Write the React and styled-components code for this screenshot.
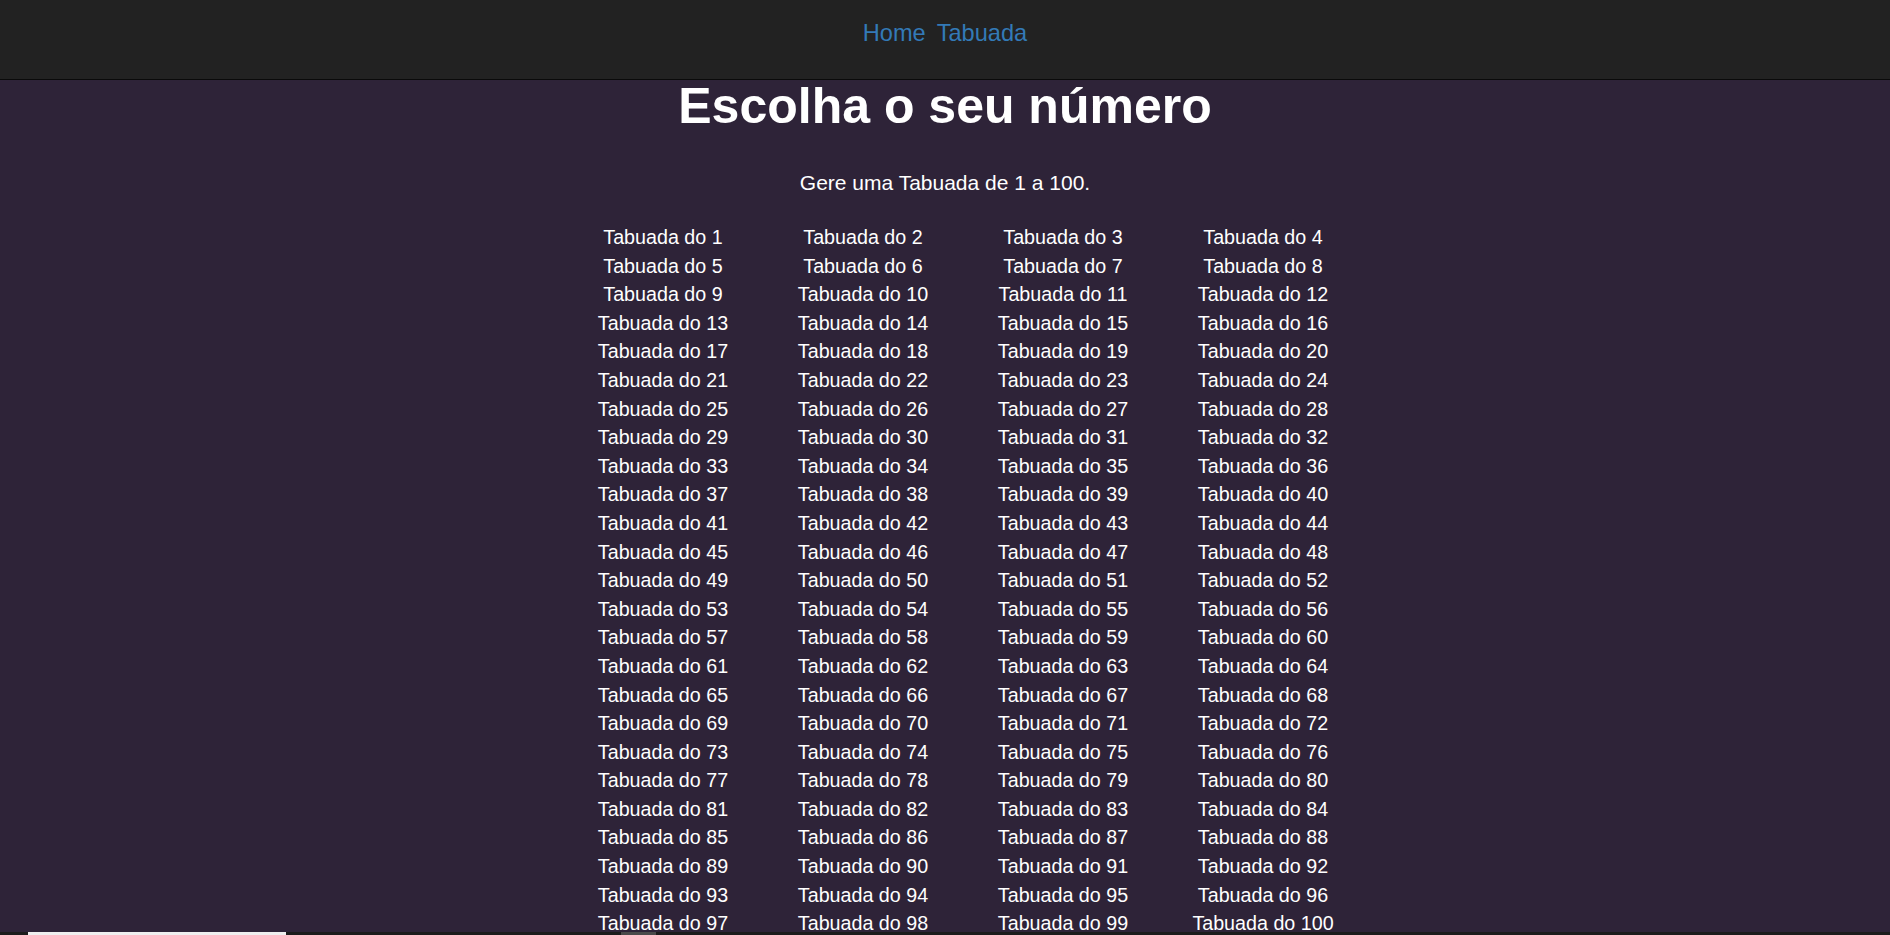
import React from "react";
import styled, { createGlobalStyle } from "styled-components";

const GlobalStyle = createGlobalStyle`
  html, body {
    margin: 0;
    padding: 0;
    height: 100%;
    overflow: hidden;
    background: #2e2338;
    font-family: "Liberation Sans", Arial, sans-serif;
    color: #ffffff;
  }
`;

const Header = styled.header`
  box-sizing: border-box;
  height: 80px;
  padding-top: 20px;
  background: #222222;
  border-bottom: 1px solid #0a0a0a;
  display: flex;
  justify-content: center;
  gap: 11px;
`;

const NavLink = styled.a`
  font-size: 23.6px;
  line-height: 26px;
  color: #337ab7;
  text-decoration: none;
  cursor: pointer;
`;

const Main = styled.main`
  text-align: center;
`;

const Title = styled.h1`
  margin: 0;
  font-size: 50px;
  line-height: 52px;
  font-weight: 700;
`;

const Subtitle = styled.p`
  margin: 39px 0 0;
  font-size: 21px;
  line-height: 24px;
`;

const List = styled.ul`
  list-style: none;
  margin: 28px auto 0;
  padding: 0 0 0 36px;
  width: 800px;
  display: grid;
  grid-template-columns: repeat(4, 200px);
`;

const Item = styled.li`
  font-size: 19.7px;
  line-height: 28.6px;
  white-space: nowrap;
  cursor: pointer;
`;

const BottomStrip = styled.div`
  position: fixed;
  left: 0;
  right: 0;
  bottom: 0;
  height: 3px;
  background: #1c1c1c;
  display: flex;
  padding-left: 28px;
`;

const StripBox = styled.div`
  width: ${(p) => p.$w}px;
  margin-left: ${(p) => p.$offset || 0}px;
  background: ${(p) => p.$color};
`;

const numbers = Array.from({ length: 100 }, (_, i) => i + 1);

export default function App() {
  return (
    <>
      <GlobalStyle />
      <Header>
        <NavLink>Home</NavLink>
        <NavLink>Tabuada</NavLink>
      </Header>
      <Main>
        <Title>Escolha o seu número</Title>
        <Subtitle>Gere uma Tabuada de 1 a 100.</Subtitle>
        <List>
          {numbers.map((n) => (
            <Item key={n}>Tabuada do {n}</Item>
          ))}
        </List>
      </Main>
      <BottomStrip>
        <StripBox $w={258} $color="#efefef" />
        <StripBox $w={35} $offset={335} $color="#4a4a4a" />
      </BottomStrip>
    </>
  );
}
